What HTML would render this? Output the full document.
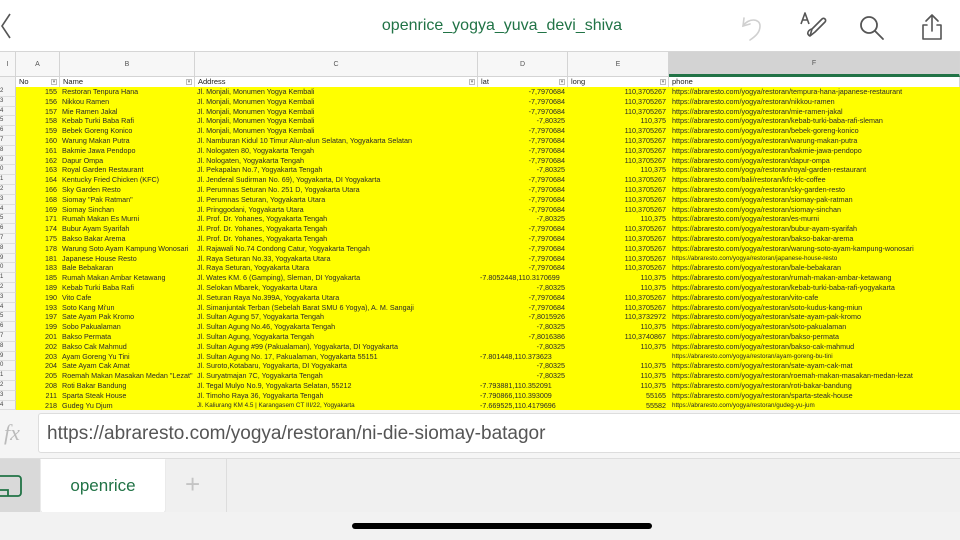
<!DOCTYPE html>
<html><head><meta charset="utf-8"><style>
*{margin:0;padding:0;box-sizing:border-box}
body{width:960px;height:540px;overflow:hidden;background:#fff;font-family:"Liberation Sans",sans-serif;position:relative}
.top{position:absolute;left:0;top:0;width:960px;height:52px;background:#fff;border-bottom:1px solid #d6d6d6}
.title{position:absolute;left:0;width:1004px;top:17px;text-align:center;color:#217346;font-size:16px}
.hdr{position:absolute;top:52px;height:25px;background:#f7f7f7;border-right:1px solid #d4d4d4;border-bottom:1px solid #d4d4d4;font-size:7px;color:#555;text-align:center;line-height:25px}
.fr{position:absolute;top:77px;height:10px;background:#fff;border-right:1px solid #d4d4d4;font-size:7.5px;line-height:10px;color:#222;padding-left:3px;white-space:nowrap;overflow:hidden}
.fr i{position:absolute;right:2px;top:2px;width:6px;height:6px;border:1px solid #bbb;font-style:normal;font-size:5px;line-height:4px;text-align:center;color:#777}
#rows{position:absolute;left:0;top:87px;width:960px;height:323px;overflow:hidden}
.r{position:relative;height:9.8px;font-size:7.2px;line-height:9.8px;color:#2a2a2a;white-space:nowrap;background:#ffff00}
.r span{position:absolute;top:0;height:9.8px;overflow:hidden;background:#ffff00}
.r .n{left:0;width:16px;background:#f4f4f4;border-right:1px solid #ccc;border-bottom:1px solid #ddd;font-size:6px;color:#444;text-align:right;padding-right:12px}
.a{left:16px;width:44px;text-align:right;padding-right:3px}
.b{left:60px;width:135px;padding-left:2px}
.c{left:195px;width:283px;padding-left:2px}
.d{left:478px;width:90px;text-align:right;padding-right:3px}
.e{left:568px;width:101px;text-align:right;padding-right:3px}
.f{left:669px;width:291px;padding-left:3px}
.sm{font-size:6.3px}
.d.l{text-align:left;padding-left:2px;overflow:visible;z-index:2}
.fx{position:absolute;left:0;top:410px;width:960px;height:48px;background:#f5f5f5}
.fxbox{position:absolute;left:38px;top:3px;width:930px;height:40px;background:#fff;border:1px solid #ddd;border-radius:3px;font-size:19px;color:#555;line-height:40px;padding-left:8px}
.tabs{position:absolute;left:0;top:458px;width:960px;height:54px;background:#f0f0f0;border-top:1px solid #ddd}
.bot{position:absolute;left:0;top:512px;width:960px;height:28px;background:#f2f2f2}
</style></head><body>
<div class="top">
<svg style="position:absolute;left:0;top:12px" width="14" height="28"><path d="M10 2 L2 14 L10 26" stroke="#555" stroke-width="1.6" fill="none"/></svg>
<div class="title">openrice_yogya_yuva_devi_shiva</div>
<svg style="position:absolute;left:738px;top:12px" width="30" height="30" fill="none" stroke-width="1.6" stroke-linecap="round">
<path d="M6 6 L5 14 L12 12" stroke="#d0d0d0"/><path d="M5 14 C10 6 22 6 22 14 C22 20 18 24 12 28" stroke="#d0d0d0"/></svg>
<svg style="position:absolute;left:800px;top:12px" width="30" height="30" fill="none" stroke="#555" stroke-width="1.6" stroke-linejoin="round">
<path d="M1 12 L5 1 L9 12 M2.5 8 H7.5"/><path d="M10 24 L12 17 L22 7 C24 5 27 8 25 10 L15 20 Z"/><path d="M10 24 C6 22 8 18 12 17"/></svg>
<svg style="position:absolute;left:858px;top:14px" width="30" height="28" fill="none" stroke="#555" stroke-width="1.8" stroke-linecap="round">
<circle cx="11" cy="11" r="8"/><path d="M17 17 L25 25"/></svg>
<svg style="position:absolute;left:918px;top:12px" width="30" height="30" fill="none" stroke="#555" stroke-width="1.6" stroke-linecap="round" stroke-linejoin="round">
<path d="M14 3 V19 M8 9 L14 3 L20 9"/><path d="M9 13 H5 V27 H23 V13 H19"/></svg>
</div>
<div class="hdr" style="left:0;width:16px">I</div>
<div class="hdr" style="left:16px;width:44px">A</div>
<div class="hdr" style="left:60px;width:135px">B</div>
<div class="hdr" style="left:195px;width:283px">C</div>
<div class="hdr" style="left:478px;width:90px">D</div>
<div class="hdr" style="left:568px;width:101px">E</div>
<div class="hdr" style="left:669px;width:291px;background:#d3d3d3;border-bottom:3px solid #217346;line-height:23px">F</div>
<div class="fr" style="left:0;width:16px;background:#f4f4f4"></div>
<div class="fr" style="left:16px;width:44px">No<i>▾</i></div>
<div class="fr" style="left:60px;width:135px">Name<i>▾</i></div>
<div class="fr" style="left:195px;width:283px">Address<i>▾</i></div>
<div class="fr" style="left:478px;width:90px">lat<i>▾</i></div>
<div class="fr" style="left:568px;width:101px">long<i>▾</i></div>
<div class="fr" style="left:669px;width:291px">phone</div>
<div id="rows">
<div class="r"><span class="n">2</span><span class="a">155</span><span class="b">Restoran Tenpura Hana</span><span class="c">Jl. Monjali, Monumen Yogya Kembali</span><span class="d">-7,7970684</span><span class="e">110,3705267</span><span class="f">https://abraresto.com/yogya/restoran/tempura-hana-japanese-restaurant</span></div>
<div class="r"><span class="n">3</span><span class="a">156</span><span class="b">Nikkou Ramen</span><span class="c">Jl. Monjali, Monumen Yogya Kembali</span><span class="d">-7,7970684</span><span class="e">110,3705267</span><span class="f">https://abraresto.com/yogya/restoran/nikkou-ramen</span></div>
<div class="r"><span class="n">4</span><span class="a">157</span><span class="b">Mie Ramen Jakal</span><span class="c">Jl. Monjali, Monumen Yogya Kembali</span><span class="d">-7,7970684</span><span class="e">110,3705267</span><span class="f">https://abraresto.com/yogya/restoran/mie-ramen-jakal</span></div>
<div class="r"><span class="n">5</span><span class="a">158</span><span class="b">Kebab Turki Baba Rafi</span><span class="c">Jl. Monjali, Monumen Yogya Kembali</span><span class="d">-7,80325</span><span class="e">110,375</span><span class="f">https://abraresto.com/yogya/restoran/kebab-turki-baba-rafi-sleman</span></div>
<div class="r"><span class="n">6</span><span class="a">159</span><span class="b">Bebek Goreng Konico</span><span class="c">Jl. Monjali, Monumen Yogya Kembali</span><span class="d">-7,7970684</span><span class="e">110,3705267</span><span class="f">https://abraresto.com/yogya/restoran/bebek-goreng-konico</span></div>
<div class="r"><span class="n">7</span><span class="a">160</span><span class="b">Warung Makan Putra</span><span class="c">Jl. Namburan Kidul 10 Timur Alun-alun Selatan, Yogyakarta Selatan</span><span class="d">-7,7970684</span><span class="e">110,3705267</span><span class="f">https://abraresto.com/yogya/restoran/warung-makan-putra</span></div>
<div class="r"><span class="n">8</span><span class="a">161</span><span class="b">Bakmie Jawa Pendopo</span><span class="c">Jl. Nologaten 80, Yogyakarta Tengah</span><span class="d">-7,7970684</span><span class="e">110,3705267</span><span class="f">https://abraresto.com/yogya/restoran/bakmie-jawa-pendopo</span></div>
<div class="r"><span class="n">9</span><span class="a">162</span><span class="b">Dapur Ompa</span><span class="c">Jl. Nologaten, Yogyakarta Tengah</span><span class="d">-7,7970684</span><span class="e">110,3705267</span><span class="f">https://abraresto.com/yogya/restoran/dapur-ompa</span></div>
<div class="r"><span class="n">0</span><span class="a">163</span><span class="b">Royal Garden Restaurant</span><span class="c">Jl. Pekapalan No.7, Yogyakarta Tengah</span><span class="d">-7,80325</span><span class="e">110,375</span><span class="f">https://abraresto.com/yogya/restoran/royal-garden-restaurant</span></div>
<div class="r"><span class="n">1</span><span class="a">164</span><span class="b">Kentucky Fried Chicken (KFC)</span><span class="c">Jl. Jenderal Sudirman No. 69), Yogyakarta, DI Yogyakarta</span><span class="d">-7,7970684</span><span class="e">110,3705267</span><span class="f">https://abraresto.com/bali/restoran/kfc-kfc-coffee</span></div>
<div class="r"><span class="n">2</span><span class="a">166</span><span class="b">Sky Garden Resto</span><span class="c">Jl. Perumnas Seturan No. 251 D, Yogyakarta Utara</span><span class="d">-7,7970684</span><span class="e">110,3705267</span><span class="f">https://abraresto.com/yogya/restoran/sky-garden-resto</span></div>
<div class="r"><span class="n">3</span><span class="a">168</span><span class="b">Siomay "Pak Ratman"</span><span class="c">Jl. Perumnas Seturan, Yogyakarta Utara</span><span class="d">-7,7970684</span><span class="e">110,3705267</span><span class="f">https://abraresto.com/yogya/restoran/siomay-pak-ratman</span></div>
<div class="r"><span class="n">4</span><span class="a">169</span><span class="b">Siomay Sinchan</span><span class="c">Jl. Pringgodani, Yogyakarta Utara</span><span class="d">-7,7970684</span><span class="e">110,3705267</span><span class="f">https://abraresto.com/yogya/restoran/siomay-sinchan</span></div>
<div class="r"><span class="n">5</span><span class="a">171</span><span class="b">Rumah Makan Es Murni</span><span class="c">Jl. Prof. Dr. Yohanes, Yogyakarta Tengah</span><span class="d">-7,80325</span><span class="e">110,375</span><span class="f">https://abraresto.com/yogya/restoran/es-murni</span></div>
<div class="r"><span class="n">6</span><span class="a">174</span><span class="b">Bubur Ayam Syarifah</span><span class="c">Jl. Prof. Dr. Yohanes, Yogyakarta Tengah</span><span class="d">-7,7970684</span><span class="e">110,3705267</span><span class="f">https://abraresto.com/yogya/restoran/bubur-ayam-syarifah</span></div>
<div class="r"><span class="n">7</span><span class="a">175</span><span class="b">Bakso Bakar Arema</span><span class="c">Jl. Prof. Dr. Yohanes, Yogyakarta Tengah</span><span class="d">-7,7970684</span><span class="e">110,3705267</span><span class="f">https://abraresto.com/yogya/restoran/bakso-bakar-arema</span></div>
<div class="r"><span class="n">8</span><span class="a">178</span><span class="b">Warung Soto Ayam Kampung Wonosari</span><span class="c">Jl. Rajawali No.74 Condong Catur, Yogyakarta Tengah</span><span class="d">-7,7970684</span><span class="e">110,3705267</span><span class="f">https://abraresto.com/yogya/restoran/warung-soto-ayam-kampung-wonosari</span></div>
<div class="r"><span class="n">9</span><span class="a">181</span><span class="b">Japanese House Resto</span><span class="c">Jl. Raya Seturan No.33, Yogyakarta Utara</span><span class="d">-7,7970684</span><span class="e">110,3705267</span><span class="f sm">https://abraresto.com/yogya/restoran/japanese-house-resto</span></div>
<div class="r"><span class="n">0</span><span class="a">183</span><span class="b">Bale Bebakaran</span><span class="c">Jl. Raya Seturan, Yogyakarta Utara</span><span class="d">-7,7970684</span><span class="e">110,3705267</span><span class="f">https://abraresto.com/yogya/restoran/bale-bebakaran</span></div>
<div class="r"><span class="n">1</span><span class="a">185</span><span class="b">Rumah Makan Ambar Ketawang</span><span class="c">Jl. Wates KM. 6 (Gamping), Sleman, DI Yogyakarta</span><span class="d l">-7.8052448,110.3170699</span><span class="e">110,375</span><span class="f">https://abraresto.com/yogya/restoran/rumah-makan-ambar-ketawang</span></div>
<div class="r"><span class="n">2</span><span class="a">189</span><span class="b">Kebab Turki Baba Rafi</span><span class="c">Jl. Selokan Mbarek, Yogyakarta Utara</span><span class="d">-7,80325</span><span class="e">110,375</span><span class="f">https://abraresto.com/yogya/restoran/kebab-turki-baba-rafi-yogyakarta</span></div>
<div class="r"><span class="n">3</span><span class="a">190</span><span class="b">Vito Cafe</span><span class="c">Jl. Seturan Raya No.399A, Yogyakarta Utara</span><span class="d">-7,7970684</span><span class="e">110,3705267</span><span class="f">https://abraresto.com/yogya/restoran/vito-cafe</span></div>
<div class="r"><span class="n">4</span><span class="a">193</span><span class="b">Soto Kang Mi'un</span><span class="c">Jl. Simanjuntak Terban (Sebelah Barat SMU 6 Yogya), A. M. Sangaji</span><span class="d">-7,7970684</span><span class="e">110,3705267</span><span class="f">https://abraresto.com/yogya/restoran/soto-kudus-kang-miun</span></div>
<div class="r"><span class="n">5</span><span class="a">197</span><span class="b">Sate Ayam Pak Kromo</span><span class="c">Jl. Sultan Agung 57, Yogyakarta Tengah</span><span class="d">-7,8015926</span><span class="e">110,3732972</span><span class="f">https://abraresto.com/yogya/restoran/sate-ayam-pak-kromo</span></div>
<div class="r"><span class="n">6</span><span class="a">199</span><span class="b">Sobo Pakualaman</span><span class="c">Jl. Sultan Agung No.46, Yogyakarta Tengah</span><span class="d">-7,80325</span><span class="e">110,375</span><span class="f">https://abraresto.com/yogya/restoran/soto-pakualaman</span></div>
<div class="r"><span class="n">7</span><span class="a">201</span><span class="b">Bakso Permata</span><span class="c">Jl. Sultan Agung, Yogyakarta Tengah</span><span class="d">-7,8016386</span><span class="e">110,3740867</span><span class="f">https://abraresto.com/yogya/restoran/bakso-permata</span></div>
<div class="r"><span class="n">8</span><span class="a">202</span><span class="b">Bakso Cak Mahmud</span><span class="c">Jl. Sultan Agung #99 (Pakualaman), Yogyakarta, DI Yogyakarta</span><span class="d">-7,80325</span><span class="e">110,375</span><span class="f">https://abraresto.com/yogya/restoran/bakso-cak-mahmud</span></div>
<div class="r"><span class="n">9</span><span class="a">203</span><span class="b">Ayam Goreng Yu Tini</span><span class="c">Jl. Sultan Agung No. 17, Pakualaman, Yogyakarta 55151</span><span class="d l">-7.801448,110.373623</span><span class="e"></span><span class="f sm">https://abraresto.com/yogya/restoran/ayam-goreng-bu-tini</span></div>
<div class="r"><span class="n">0</span><span class="a">204</span><span class="b">Sate Ayam Cak Amat</span><span class="c">Jl. Suroto,Kotabaru, Yogyakarta, DI Yogyakarta</span><span class="d">-7,80325</span><span class="e">110,375</span><span class="f">https://abraresto.com/yogya/restoran/sate-ayam-cak-mat</span></div>
<div class="r"><span class="n">1</span><span class="a">205</span><span class="b">Roemah Makan Masakan Medan "Lezat"</span><span class="c">Jl. Suryatmajan 7C, Yogyakarta Tengah</span><span class="d">-7,80325</span><span class="e">110,375</span><span class="f">https://abraresto.com/yogya/restoran/roemah-makan-masakan-medan-lezat</span></div>
<div class="r"><span class="n">2</span><span class="a">208</span><span class="b">Roti Bakar Bandung</span><span class="c">Jl. Tegal Mulyo No.9, Yogyakarta Selatan, 55212</span><span class="d l">-7.793881,110.352091</span><span class="e">110,375</span><span class="f">https://abraresto.com/yogya/restoran/roti-bakar-bandung</span></div>
<div class="r"><span class="n">3</span><span class="a">211</span><span class="b">Sparta Steak House</span><span class="c">Jl. Timoho Raya 36, Yogyakarta Tengah</span><span class="d l">-7.790866,110.393009</span><span class="e">55165</span><span class="f">https://abraresto.com/yogya/restoran/sparta-steak-house</span></div>
<div class="r"><span class="n">4</span><span class="a">218</span><span class="b">Gudeg Yu Djum</span><span class="c sm">Jl. Kaliurang KM 4.5 | Karangasem CT III/22, Yogyakarta</span><span class="d l">-7.669525,110.4179696</span><span class="e">55582</span><span class="f sm">https://abraresto.com/yogya/restoran/gudeg-yu-jum</span></div>
</div>
<div class="fx">
<div style="position:absolute;left:4px;top:10px;font-family:'Liberation Serif',serif;font-style:italic;font-size:22px;color:#bbb">fx</div>
<div class="fxbox">https://abraresto.com/yogya/restoran/ni-die-siomay-batagor</div>
</div>
<div class="tabs">
<div style="position:absolute;left:0;top:0;width:40px;height:53px;background:#d9d9d9"></div>
<svg style="position:absolute;left:0;top:15px" width="24" height="26" fill="none" stroke="#217346" stroke-width="1.8"><rect x="-4" y="2" width="25" height="20" rx="3"/><path d="M-4 16 H8 V22"/></svg>
<div style="position:absolute;left:41px;top:0;width:124px;height:54px;background:#fff;border-radius:0 0 3px 3px;box-shadow:0 1px 1px #ccc;color:#217346;font-size:17px;text-align:center;line-height:54px">openrice</div>
<div style="position:absolute;left:185px;top:10px;font-size:26px;color:#c4c4c4;font-weight:300">+</div>
<div style="position:absolute;left:226px;top:0;width:1px;height:54px;background:#ddd"></div>
</div>
<div class="bot"><div style="position:absolute;left:352px;top:11px;width:300px;height:6px;border-radius:3px;background:#000"></div></div>
</body></html>
